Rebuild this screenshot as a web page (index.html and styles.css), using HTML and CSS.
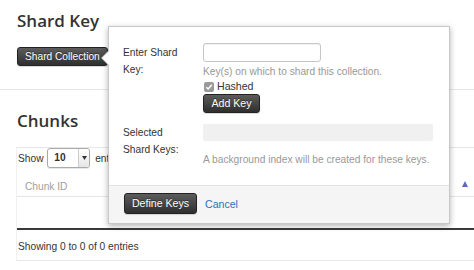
FILE: index.html
```html
<!DOCTYPE html>
<html>
<head>
<meta charset="utf-8">
<link rel="stylesheet" href="styles.css">
</head>
<body>
<div class="section">
  <h2 class="title">Shard Key</h2>
  <div class="anchor">
    <button class="btn btn-shard">Shard Collection</button>
    <div class="popover">
      <div class="pop-body">
        <div class="field">
          <div class="lbl">Enter Shard<br>Key:</div>
          <div class="ctl">
            <div class="txt"></div>
            <div class="help">Key(s) on which to shard this collection.</div>
            <div class="check"><span class="box"><svg width="8" height="8" viewBox="0 0 8 8"><path d="M1.3 4.2 L3.2 6 L6.8 1.8" fill="none" stroke="#fff" stroke-width="1.5"/></svg></span>Hashed</div>
            <button class="btn btn-add">Add Key</button>
          </div>
        </div>
        <div class="field field2">
          <div class="lbl">Selected<br>Shard Keys:</div>
          <div class="ctl">
            <div class="keys"></div>
            <div class="help help2">A background index will be created for these keys.</div>
          </div>
        </div>
      </div>
      <div class="pop-foot">
        <button class="btn btn-define">Define Keys</button>
        <a class="link">Cancel</a>
      </div>
    </div>
  </div>
</div>
<div class="rule"></div>
<div class="section">
  <h2 class="title title2">Chunks</h2>
  <div class="dt">
    <div class="dt-len">Show <span class="sel"><span class="sel-val">10</span><span class="sel-arr"><svg width="5" height="4" viewBox="0 0 5 4"><path d="M0 0 L5 0 L2.5 4 Z" fill="#333"/></svg></span></span> entries</div>
    <div class="dt-head"><span class="th">Chunk ID</span><span class="sort"></span></div>
    <div class="dt-row"></div>
    <div class="dt-info">Showing 0 to 0 of 0 entries</div>
  </div>
</div>
</body>
</html>
```
FILE: styles.css
```css
body {
  margin: 0;
  font-family: "Liberation Sans", Arial, sans-serif;
  font-size: 10.2px;
  color: #333;
  background: #fff;
}
.section {
  padding-left: 17px;
}
.title {
  font-family: "Open Sans", sans-serif;
  font-weight: 600;
  font-size: 17px;
  line-height: 20px;
  margin: 11px 0 0;
  color: #333;
}
.title2 {
  margin-top: 21px;
}
.anchor {
  position: relative;
  margin-top: 16px;
  height: 19px;
}
.btn {
  display: inline-block;
  font-family: "Liberation Sans", Arial, sans-serif;
  font-size: 10.2px;
  color: #fff;
  background: linear-gradient(#5c5c5c, #2f2f2f);
  border: 1px solid #222;
  border-radius: 3px;
  padding: 0 8px;
  height: 19px;
  line-height: 17px;
  text-shadow: 0 -1px 0 rgba(0,0,0,.4);
  box-shadow: 0 1px 1px rgba(0,0,0,.15);
  cursor: pointer;
  margin: 0;
}
.btn-shard {
  width: 91px;
  padding: 0 0 0 7px;
  text-align: left;
  white-space: nowrap;
  overflow: hidden;
}
.rule {
  height: 1px;
  background: #e6e6e6;
  margin-top: 23px;
}
.popover {
  position: absolute;
  left: 91px;
  top: -21px;
  width: 340px;
  background: #fff;
  border: 1px solid #c8c8c8;
  box-shadow: 0 2px 6px rgba(0,0,0,.3);
  z-index: 5;
}
.popover::before {
  content: "";
  position: absolute;
  left: -8px;
  top: 23px;
  border-style: solid;
  border-width: 8px 8px 8px 0;
  border-color: transparent #bbb transparent transparent;
}
.popover::after {
  content: "";
  position: absolute;
  left: -7px;
  top: 23px;
  border-style: solid;
  border-width: 8px 8px 8px 0;
  border-color: transparent #fff transparent transparent;
}
.pop-body {
  padding: 16px 15px 18px 14px;
}
.field {
  display: flex;
}
.field2 {
  margin-top: 11px;
}
.lbl {
  width: 80px;
  flex: none;
  line-height: 17px;
  padding-top: 1px;
}
.field2 .lbl {
  padding-top: 0;
}
.ctl {
  flex: 1;
  display: flex;
  flex-direction: column;
  align-items: flex-start;
}
.txt {
  width: 116px;
  height: 17px;
  border: 1px solid #c6c6c6;
  border-radius: 3px;
  box-shadow: inset 0 1px 1px rgba(0,0,0,.06);
}
.help {
  color: #999;
  line-height: 15px;
  margin-top: 2px;
  white-space: nowrap;
}
.help2 {
  margin-top: 11px;
}
.check {
  display: flex;
  align-items: center;
  line-height: 15px;
  color: #333;
  margin-left: 1px;
  font-size: 10.6px;
}
.box {
  width: 10px;
  height: 10px;
  border-radius: 2px;
  background: #9a9a9a;
  display: inline-flex;
  align-items: center;
  justify-content: center;
  margin-right: 3px;
}
.btn-add {
  padding: 0 7px;
  width: 57px;
  font-size: 10.6px;
}
.keys {
  width: 230px;
  height: 17px;
  background: #f0f0f0;
  border-radius: 2px;
}
.pop-foot {
  border-top: 1px solid #e3e3e3;
  background: #f5f5f5;
  padding: 7px 15px 9px 15px;
  display: flex;
  align-items: center;
  gap: 8px;
}
.btn-define {
  height: 21px;
  line-height: 19px;
  width: 73px;
  padding: 0;
  text-align: center;
  font-size: 10.6px;
}
.link {
  color: #2f6fb8;
  cursor: pointer;
  font-size: 10.6px;
}
.dt {
  margin-top: 16px;
  border-top: 1px solid #e6e6e6;
  border-left: 1px solid #f0f0f0;
  margin-left: -1px;
}
.dt-len {
  height: 20px;
  display: flex;
  align-items: center;
  white-space: pre;
  padding-left: 1px;
}
.sel {
  box-sizing: border-box;
  display: inline-flex;
  width: 43px;
  height: 20px;
  border: 1px solid #aaa;
  border-radius: 3px;
  margin: 0 2px 0 1px;
  box-shadow: 0 1px 1px rgba(0,0,0,.1);
}
.sel-val {
  flex: 1;
  font-weight: bold;
  padding-left: 6px;
  line-height: 18px;
}
.sel-arr {
  width: 10px;
  border-left: 1px solid #ccc;
  display: flex;
  align-items: center;
  justify-content: center;
  background: linear-gradient(#fff, #e6e6e6);
  border-radius: 0 3px 3px 0;
}
.dt-head {
  display: flex;
  justify-content: space-between;
  align-items: center;
  padding: 12px 6px 2px 8px;
  line-height: 14px;
  border-bottom: 1px solid #e6e6e6;
}
.th {
  color: #a0a0a0;
}
.sort {
  width: 0;
  height: 0;
  border-style: solid;
  border-width: 0 3.5px 6px 3.5px;
  border-color: transparent transparent #6266c2 transparent;
  margin-bottom: 7px;
}
.dt-row {
  height: 31px;
  border-bottom: 2px solid #3a3a3a;
}
.dt-info {
  line-height: 14px;
  padding: 10px 0 6px 1px;
  border-bottom: 1px solid #e8e8e8;
}
```
